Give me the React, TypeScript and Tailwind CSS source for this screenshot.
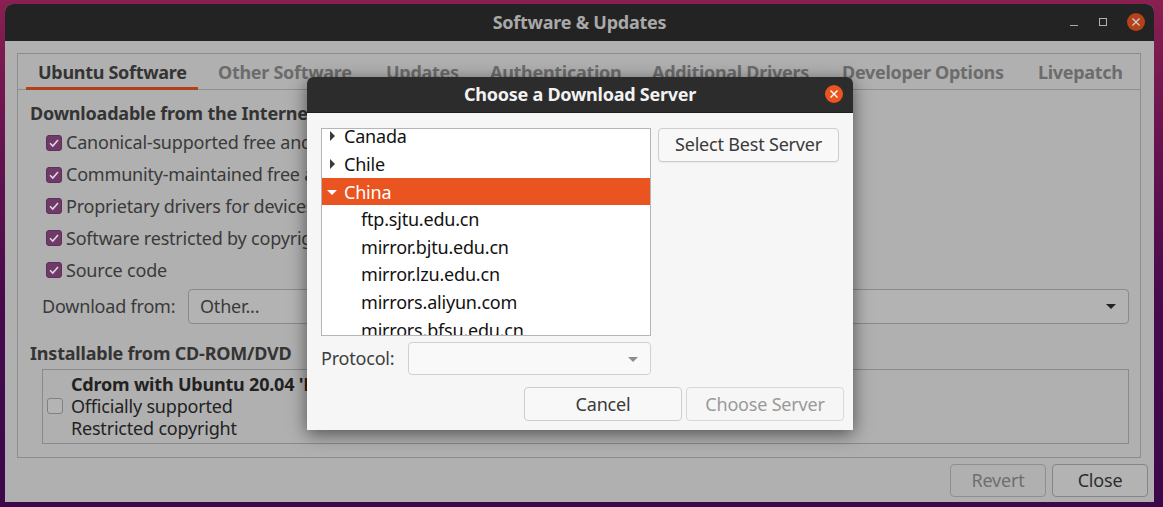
const font = { fontFamily: '"Noto Sans", sans-serif' };

function Check({ on }: { on?: boolean }) {
  if (!on) return <span className="block w-[16px] h-[16px] rounded-[3px] border border-[#808080] bg-[#b4b4b4] shrink-0" />;
  return (
    <span className="flex items-center justify-center w-[16px] h-[16px] rounded-[3px] bg-[#6f3a68] border border-[#5d3057] shrink-0">
      <svg width="12" height="12" viewBox="0 0 12 12"><path d="M2 6.2 L4.8 9 L10 3" fill="none" stroke="#e0d8de" strokeWidth="1.6" /></svg>
    </span>
  );
}

function Arrow({ down, color }: { down?: boolean; color: string }) {
  return (
    <svg width="10" height="10" viewBox="0 0 10 10" className="shrink-0">
      {down ? <polygon points="0,3 10,3 5,8" fill={color} /> : <polygon points="3,0 8,5 3,10" fill={color} />}
    </svg>
  );
}

const tabs: [string, string][] = [
  ['Ubuntu Software', 'w-[172px] mr-[8px]'],
  ['Other Software', 'w-[168px]'],
  ['Updates', 'w-[104px]'],
  ['Authentication', 'w-[162px]'],
  ['Additional Drivers', 'w-[190px]'],
  ['Developer Options', 'w-[196px]'],
  ['Livepatch', 'w-[100px]'],
];

const sources = [
  'Canonical-supported free and open-source software (main)',
  'Community-maintained free and open-source software (universe)',
  'Proprietary drivers for devices (restricted)',
  'Software restricted by copyright or legal issues (multiverse)',
  'Source code',
];

const mirrors = ['ftp.sjtu.edu.cn', 'mirror.bjtu.edu.cn', 'mirror.lzu.edu.cn', 'mirrors.aliyun.com', 'mirrors.bfsu.edu.cn'];

function Dialog() {
  return (
    <div className="absolute left-[307px] top-[77px] w-[546px] h-[353px] flex flex-col rounded-t-[6px] bg-[#f6f6f6] shadow-[0_4px_18px_rgba(0,0,0,0.55)]">
      <div className="relative h-[36px] shrink-0 rounded-t-[6px] bg-[#2c2c2c] flex items-center justify-center border-b border-[#1e1e1e]">
        <span className="text-[18px] font-bold text-[#f2f2f2] tracking-[-0.25px]">Choose a Download Server</span>
        <span className="absolute right-[10px] top-[8px] w-[18px] h-[18px] rounded-full bg-[#e95420] flex items-center justify-center">
          <svg width="10" height="10" viewBox="0 0 10 10"><path d="M1.5 1.5 L8.5 8.5 M8.5 1.5 L1.5 8.5" stroke="#fff" strokeWidth="1.4" /></svg>
        </span>
      </div>
      <div className="flex flex-col pl-[14px] pr-[9px] pt-[15px]">
        <div className="flex gap-[7px]">
          <div className="w-[330px] h-[208px] border border-[#b5b5b5] bg-white overflow-hidden shrink-0">
            <div className="-mt-[7px] text-[18px] text-[#121212] tracking-[-0.2px]">
              {['Canada', 'Chile'].map((c) => (
                <div key={c} className="h-[27.8px] flex items-center pl-[5px] pt-[1px] gap-[7px]">
                  <Arrow color="#3a3a3a" />
                  <span>{c}</span>
                </div>
              ))}
              <div className="h-[27.8px] flex items-center pl-[5px] pt-[1px] gap-[7px] bg-[#e95420] text-white">
                <Arrow down color="#ffffff" />
                <span>China</span>
              </div>
              {mirrors.map((m) => (
                <div key={m} className="h-[27.8px] flex items-center pl-[39px]">{m}</div>
              ))}
            </div>
          </div>
          <div className="w-[181px] h-[34px] pb-[1px] rounded-[4px] border border-[#cdcdcd] bg-[#f8f8f8] text-[18px] text-[#3a3a3a] tracking-[-0.2px] flex items-center justify-center shadow-[0_1px_0_rgba(0,0,0,0.05)]">Select Best Server</div>
        </div>
        <div className="flex items-center mt-[6px] w-[330px]">
          <span className="w-[87px] text-[18px] text-[#3d3d3d] tracking-[-0.2px]">Protocol:</span>
          <div className="flex-1 h-[33px] rounded-[4px] border border-[#d0d0d0] bg-[#f9f9f9] flex items-center justify-end pr-[12px]">
            <Arrow down color="#8e8e8e" />
          </div>
        </div>
        <div className="flex justify-end gap-[4px] mt-[12px]">
          <div className="w-[158px] h-[34px] rounded-[4px] border border-[#cdcdcd] bg-[#f8f8f8] text-[18px] text-[#3a3a3a] tracking-[-0.2px] flex items-center justify-center">Cancel</div>
          <div className="w-[158px] h-[34px] rounded-[4px] border border-[#d8d8d8] bg-[#f6f6f6] text-[18px] text-[#9a9a9a] tracking-[-0.2px] flex items-center justify-center">Choose Server</div>
        </div>
      </div>
    </div>
  );
}

export default function App() {
  return (
    <div className="relative w-[1163px] h-[507px] overflow-hidden pt-[4px] pl-[5px] bg-[linear-gradient(180deg,#8a1f50_0%,#6a1450_25%,#460a4d_60%,#3c084a_100%)]" style={font}>
      <div className="w-[1149px] h-[498px] flex flex-col rounded-t-[8px] bg-[#b0b0b0]">
        <div className="relative h-[37px] shrink-0 rounded-t-[8px] bg-[#232323] flex items-center justify-center">
          <span className="text-[18px] font-bold text-[#a9a9a9] tracking-[-0.25px]">Software &amp; Updates</span>
          <div className="absolute right-[9px] top-[9px] flex items-center gap-[19px]">
            <svg width="10" height="10" viewBox="0 0 10 10"><path d="M1 8.5 H9" stroke="#a8a8a8" strokeWidth="1" /></svg>
            <svg width="10" height="10" viewBox="0 0 10 10"><rect x="1.5" y="1.5" width="7" height="7" fill="none" stroke="#b0b0b0" strokeWidth="1" /></svg>
            <span className="w-[18px] h-[18px] rounded-full bg-[#b5431a] flex items-center justify-center">
              <svg width="10" height="10" viewBox="0 0 10 10"><path d="M1.5 1.5 L8.5 8.5 M8.5 1.5 L1.5 8.5" stroke="#cfcfcf" strokeWidth="1.3" /></svg>
            </span>
          </div>
        </div>
        <div className="flex-1 flex flex-col pl-[12px] pr-[13px] pt-[12px]">
          <div className="h-[405px] border border-[#8c8c8c] flex flex-col shrink-0">
            <div className="h-[36px] shrink-0 flex pl-[8px] border-b border-[#8f8f8f]">
              {tabs.map(([t, w], i) => (
                <div key={t} className={`${w} h-[36px] pl-[12px] flex items-center text-[18px] font-bold tracking-[-0.3px] whitespace-nowrap ${i === 0 ? 'text-[#343434] border-b-[3px] border-[#b2401a] pt-[3px]' : 'text-[#6c6c6c]'}`}>{t}</div>
              ))}
            </div>
            <div className="flex-1 flex flex-col pl-[12px] pr-[11px] pt-[11px] text-[#3a3a3a] text-[18px] tracking-[-0.2px]">
              <div className="h-[24px] flex items-center font-bold text-[#343434]">Downloadable from the Internet</div>
              <div className="flex flex-col pl-[16px] pt-[2px]">
                {sources.map((s) => (
                  <div key={s} className="h-[31.8px] flex items-center gap-[4px] whitespace-nowrap">
                    <Check on />
                    <span>{s}</span>
                  </div>
                ))}
              </div>
              <div className="flex items-center h-[35px] pl-[12px] mt-[3px]">
                <span className="w-[146px]">Download from:</span>
                <div className="flex-1 h-[35px] rounded-[4px] border border-[#8a8a8a] bg-[#b3b3b3] flex items-center justify-between pl-[11px] pr-[12px]">
                  <span>Other...</span>
                  <Arrow down color="#222222" />
                </div>
              </div>
              <div className="h-[24px] flex items-center font-bold text-[#343434] mt-[18px]">Installable from CD-ROM/DVD</div>
              <div className="ml-[12px] mt-[3px] h-[75px] border border-[#8a8a8a] flex items-center pl-[4px] gap-[8px]">
                <Check />
                <div className="flex flex-col leading-[22px] text-[#222222]">
                  <span className="font-bold">Cdrom with Ubuntu 20.04 'Focal Fossa'</span>
                  <span>Officially supported</span>
                  <span>Restricted copyright</span>
                </div>
              </div>
            </div>
          </div>
          <div className="flex justify-end gap-[6px] pt-[6px] -mr-[7px]">
            <div className="w-[96px] h-[33px] rounded-[4px] border border-[#8f8f8f] text-[18px] text-[#6e6e6e] tracking-[-0.2px] flex items-center justify-center">Revert</div>
            <div className="w-[96px] h-[33px] rounded-[4px] border border-[#858585] bg-[#b3b3b3] text-[18px] text-[#2e2e2e] tracking-[-0.2px] flex items-center justify-center">Close</div>
          </div>
        </div>
      </div>
      <Dialog />
    </div>
  );
}
